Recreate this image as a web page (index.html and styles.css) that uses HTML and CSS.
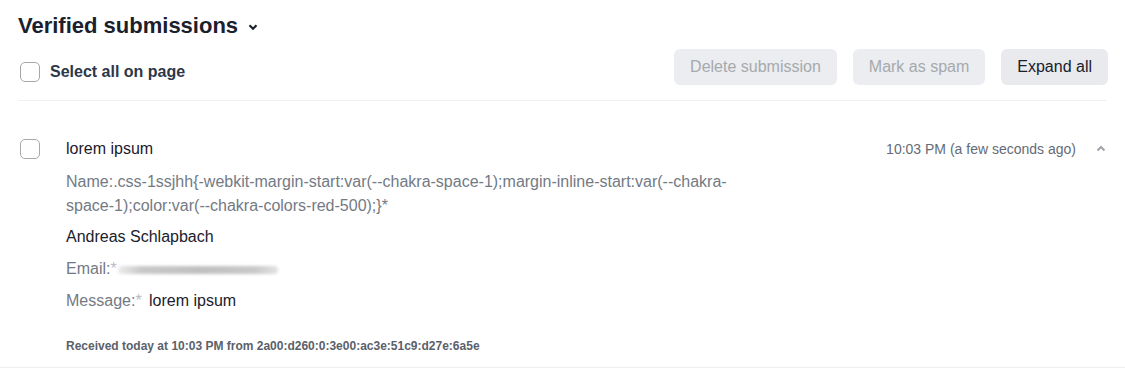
FILE: index.html
```html
<!DOCTYPE html>
<html>
<head>
<meta charset="utf-8">
<link rel="stylesheet" href="styles.css">
</head>
<body>
<div class="page">
  <div class="title-row">
    <h1 class="title">Verified submissions</h1>
    <svg class="title-chev" width="12" height="12" viewBox="0 0 12 12"><path d="M2.5 4.2 L6 7.7 L9.5 4.2" fill="none" stroke="#1a202c" stroke-width="2.2"/></svg>
  </div>
  <div class="toolbar">
    <label class="select-all"><span class="checkbox"></span><span class="select-label">Select all on page</span></label>
    <div class="actions">
      <button class="btn disabled">Delete submission</button>
      <button class="btn disabled">Mark as spam</button>
      <button class="btn">Expand all</button>
    </div>
  </div>
  <div class="divider"></div>
  <div class="submission">
    <span class="checkbox row-check"></span>
    <div class="sub-body">
      <div class="sub-head">
        <div class="sub-title">lorem ipsum</div>
        <div class="sub-meta">
          <span class="time">10:03 PM (a few seconds ago)</span>
          <svg class="up-chev" width="12" height="12" viewBox="0 0 12 12"><path d="M2.5 7.5 L6 4 L9.5 7.5" fill="none" stroke="#a0a4a8" stroke-width="2"/></svg>
        </div>
      </div>
      <div class="fields">
        <div class="field label-text name-field">Name:.css-1ssjhh{-webkit-margin-start:var(--chakra-space-1);margin-inline-start:var(--chakra-space-1);color:var(--chakra-colors-red-500);}*</div>
        <div class="field value">Andreas Schlapbach</div>
        <div class="field"><span class="label-text">Email:</span><span class="star">*</span><span class="blurred"></span></div>
        <div class="field"><span class="label-text">Message:</span><span class="star">*</span> <span class="value msg-value">lorem ipsum</span></div>
      </div>
      <div class="received">Received today at 10:03 PM from 2a00:d260:0:3e00:ac3e:51c9:d27e:6a5e</div>
    </div>
  </div>
</div>
</body>
</html>
```

FILE: styles.css
```css
* { box-sizing: border-box; }
html, body { margin: 0; padding: 0; background: #ffffff; }
body {
  font-family: "Liberation Sans", Arial, sans-serif;
  font-size: 16px;
  color: #1a202c;
}
.page {
  padding: 0 18px 0 18px;
}
.title-row {
  display: flex;
  align-items: center;
  height: 50px;
  padding-top: 1px;
}
.title {
  margin: 0;
  font-size: 22px;
  font-weight: bold;
  color: #1a202c;
  line-height: 49px;
}
.title-chev {
  margin-left: 9px;
  margin-top: 2px;
}
.toolbar {
  display: flex;
  align-items: center;
  justify-content: space-between;
  height: 36px;
  margin-top: -1px;
}
.select-all {
  display: flex;
  align-items: center;
  padding-left: 2px;
  margin-top: 9px;
}
.checkbox {
  display: inline-block;
  width: 20px;
  height: 20px;
  border: 1.5px solid #a8a8a8;
  border-radius: 5px;
  background: #fff;
}
.select-label {
  margin-left: 10px;
  font-weight: bold;
  font-size: 16px;
  color: #2d3748;
}
.actions {
  display: flex;
  gap: 16px;
  margin-right: -1px;
}
.btn {
  font-family: "Liberation Sans", Arial, sans-serif;
  font-size: 16px;
  height: 36px;
  padding: 0 16px;
  border: none;
  border-radius: 6px;
  background: #e8eaed;
  color: #1a202c;
}
.btn.disabled {
  color: #a6a9ad;
  background: #ebedf0;
}
.divider {
  height: 1px;
  background: #f0f1f3;
  margin-top: 15px;
}
.submission {
  display: flex;
  align-items: flex-start;
  padding: 37px 18px 0 20px;
  border-bottom: 1px solid #eceef0;
  height: 267px;
  margin-right: -18px;
  margin-left: -18px;
}
.row-check {
  flex: none;
  margin-top: 1px;
}
.sub-body {
  flex: 1;
  margin-left: 26px;
}
.sub-head {
  display: flex;
  justify-content: space-between;
  align-items: center;
  height: 22px;
}
.sub-title {
  font-size: 16px;
  color: #1a202c;
}
.sub-meta {
  display: flex;
  align-items: center;
}
.time {
  font-size: 14px;
  color: #646b75;
}
.up-chev {
  margin-left: 19px;
}
.fields {
  margin-top: 10px;
  display: flex;
  flex-direction: column;
  gap: 8px;
  width: 680px;
}
.field {
  line-height: 24px;
  font-size: 16px;
}
.name-field {
  margin-bottom: -1px;
}
.label-text { color: #737a84; }
.value { color: #1a202c; }
.msg-value { margin-left: 3px; }
.star { color: #b8bcc2; }
.blurred {
  display: inline-block;
  width: 160px;
  height: 8px;
  margin-left: 1px;
  vertical-align: middle;
  border-radius: 4px;
  background: linear-gradient(90deg, #ececec 0%, #c8c8c8 15%, #c0c0c0 50%, #c8c8c8 85%, #e2e2e2 100%);
  filter: blur(1.8px);
}
.received {
  margin-top: 26px;
  font-size: 12px;
  font-weight: bold;
  color: #5a616b;
}
```
